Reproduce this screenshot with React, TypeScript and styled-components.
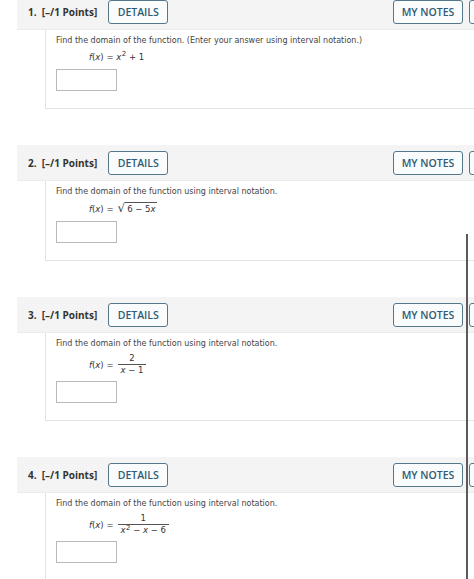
import styled, { createGlobalStyle } from 'styled-components';
import { ReactNode } from 'react';

const GlobalStyle = createGlobalStyle`
  html, body {
    margin: 0;
    padding: 0;
    background: #ffffff;
    overflow: hidden;
  }
  body {
    font-family: "Open Sans", "DejaVu Sans", sans-serif;
    color: #333;
  }
`

type QuestionData = {
  num: number
  prompt: string
  formula: ReactNode
}

const Var = styled.i`
  font-style: italic;
`

const Sup = styled.span`
  display: inline-block;
  font-size: 7px;
  line-height: 7px;
  transform: translateY(-3px);
  margin-left: 0.5px;
`

const Fraction = styled.span`
  display: inline-flex;
  flex-direction: column;
  align-items: center;
  vertical-align: middle;
  margin-left: 4px;
`

const Numer = styled.span`
  padding: 0 3px 1px;
  line-height: 9px;
`

const Denom = styled.span`
  border-top: 1px solid #555;
  padding: 1px 3px 0;
  line-height: 9px;
`

const Radical = styled.span`
  display: inline-flex;
  align-items: flex-end;
  margin-left: 4px;
`

const RadicalSign = styled.span`
  font-size: 12px;
  line-height: 13px;
`

const Radicand = styled.span`
  border-top: 1px solid #555;
  padding: 1px 1px 0 2px;
  line-height: 11px;
`

const questions: QuestionData[] = [
  {
    num: 1,
    prompt: 'Find the domain of the function. (Enter your answer using interval notation.)',
    formula: (
      <>
        <Var>f</Var>(<Var>x</Var>) = <Var>x</Var><Sup>2</Sup> + 1
      </>
    ),
  },
  {
    num: 2,
    prompt: 'Find the domain of the function using interval notation.',
    formula: (
      <>
        <Var>f</Var>(<Var>x</Var>) =
        <Radical>
          <RadicalSign>√</RadicalSign>
          <Radicand>6 − 5<Var>x</Var></Radicand>
        </Radical>
      </>
    ),
  },
  {
    num: 3,
    prompt: 'Find the domain of the function using interval notation.',
    formula: (
      <>
        <Var>f</Var>(<Var>x</Var>) =
        <Fraction>
          <Numer>2</Numer>
          <Denom><Var>x</Var> − 1</Denom>
        </Fraction>
      </>
    ),
  },
  {
    num: 4,
    prompt: 'Find the domain of the function using interval notation.',
    formula: (
      <>
        <Var>f</Var>(<Var>x</Var>) =
        <Fraction>
          <Numer>1</Numer>
          <Denom><Var>x</Var><Sup>2</Sup> − <Var>x</Var> − 6</Denom>
        </Fraction>
      </>
    ),
  },
]

const Question = ({ num, prompt, formula }: QuestionData) => (
  <Block>
    <Header>
      <Points>{num}.&nbsp; [–/1 Points]</Points>
      <Button width={60}>DETAILS</Button>
      <Spacer />
      <Button width={70}>MY NOTES</Button>
      {/* next button is cut off by the window edge, only its left border shows */}
      <Button width={110} overflowing />
    </Header>
    <Body>
      <Prompt>{prompt}</Prompt>
      <Formula>{formula}</Formula>
      <AnswerBox />
    </Body>
  </Block>
)

const App = () => (
  <>
    <GlobalStyle />
    <Page>
      {questions.map((q) => (
        <Question key={q.num} {...q} />
      ))}
      <ScrollThumb />
    </Page>
  </>
)

const Page = styled.div`
  position: relative;
  width: 474px;
  height: 585px;
  overflow: hidden;
  display: flex;
  flex-direction: column;
  gap: 36px;
  margin-top: -6px;
`

const Block = styled.section`
  display: flex;
  flex-direction: column;
`

const Header = styled.div`
  display: flex;
  align-items: center;
  gap: 6px;
  height: 36px;
  margin-left: 17px;
  padding-left: 11px;
  background: #f4f4f4;
  border-bottom: 1px solid #ececec;
  box-sizing: border-box;
`

const Points = styled.span`
  font-weight: 700;
  font-size: 10px;
  color: #333;
  margin-right: 5px;
  white-space: nowrap;
`

const Spacer = styled.div`
  flex: 1;
`

const Button = styled.div<{ width: number; overflowing?: boolean }>`
  flex-shrink: 0;
  box-sizing: border-box;
  width: ${(p) => p.width}px;
  height: 24px;
  margin-right: ${(p) => (p.overflowing ? `${5 - p.width}px` : '0')};
  display: flex;
  align-items: center;
  justify-content: center;
  border: 1.5px solid #54778a;
  border-radius: 3px;
  background: #f9fbfc;
  color: #2f5c74;
  font-weight: 600;
  font-size: 10.5px;
  white-space: nowrap;
`

const Body = styled.div`
  margin-left: 45px;
  border-left: 1px solid #e3e3e3;
  border-bottom: 1px solid #e3e3e3;
  padding: 6px 0 17px 10px;
  display: flex;
  flex-direction: column;
  align-items: flex-start;
`

const Prompt = styled.p`
  margin: 0;
  font-family: "DejaVu Sans", Verdana, sans-serif;
  font-size: 8px;
  line-height: 10px;
  color: #444;
`

const Formula = styled.div`
  margin: 5px 0 6px 33px;
  font-family: "DejaVu Sans", Verdana, sans-serif;
  font-size: 8.5px;
  line-height: 12px;
  color: #333;
  display: flex;
  align-items: center;
  white-space: pre;
`

const AnswerBox = styled.div`
  width: 61px;
  height: 22px;
  box-sizing: border-box;
  border: 1px solid #b9b9b9;
  background: #fff;
`

const ScrollThumb = styled.div`
  position: absolute;
  left: 466px;
  top: 240px;
  width: 2px;
  height: 360px;
  background: #5a5a5a;
`

export default App
